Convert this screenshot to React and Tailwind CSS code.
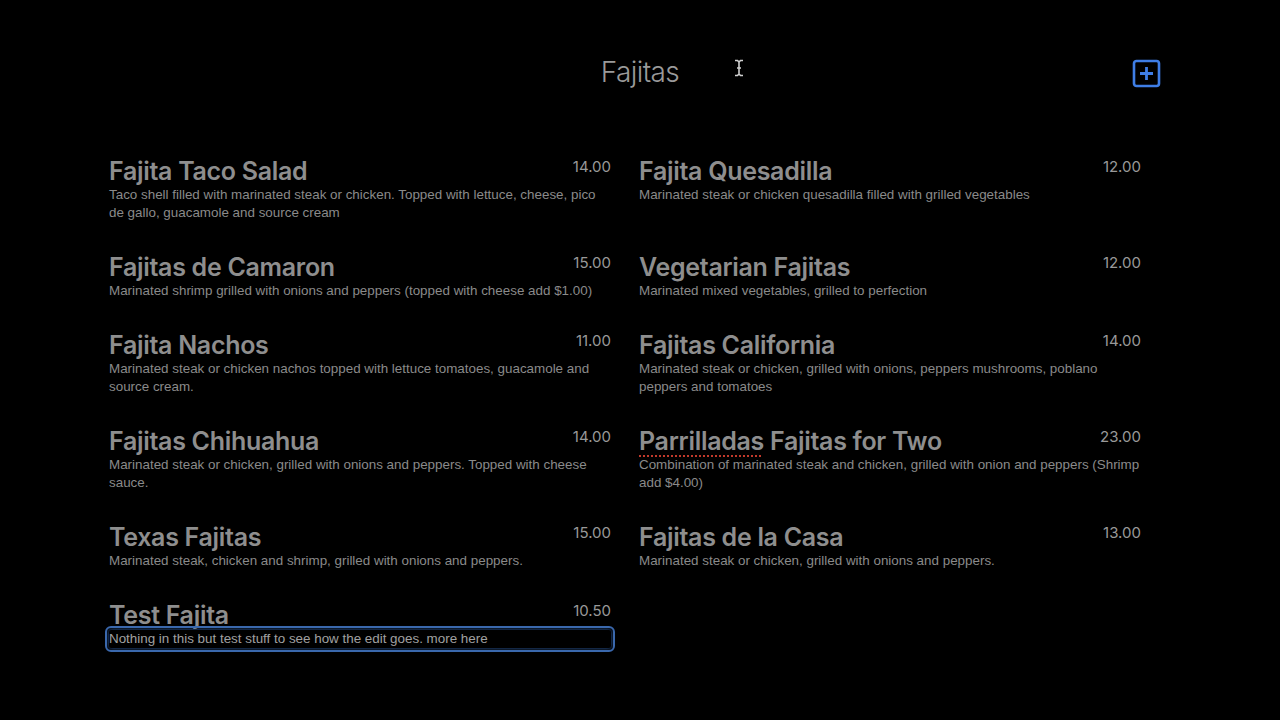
import React from "react";

const items = [
  ["Fajita Taco Salad", "14.00", "Taco shell filled with marinated steak or chicken. Topped with lettuce, cheese, pico de gallo, guacamole and source cream"],
  ["Fajita Quesadilla", "12.00", "Marinated steak or chicken quesadilla filled with grilled vegetables"],
  ["Fajitas de Camaron", "15.00", "Marinated shrimp grilled with onions and peppers (topped with cheese add $1.00)"],
  ["Vegetarian Fajitas", "12.00", "Marinated mixed vegetables, grilled to perfection"],
  ["Fajita Nachos", "11.00", "Marinated steak or chicken nachos topped with lettuce tomatoes, guacamole and source cream."],
  ["Fajitas California", "14.00", "Marinated steak or chicken, grilled with onions, peppers mushrooms, poblano peppers and tomatoes"],
  ["Fajitas Chihuahua", "14.00", "Marinated steak or chicken, grilled with onions and peppers. Topped with cheese sauce."],
  ["Parrilladas Fajitas for Two", "23.00", "Combination of marinated steak and chicken, grilled with onion and peppers (Shrimp add $4.00)"],
  ["Texas Fajitas", "15.00", "Marinated steak, chicken and shrimp, grilled with onions and peppers."],
  ["Fajitas de la Casa", "13.00", "Marinated steak or chicken, grilled with onions and peppers."],
  ["Test Fajita", "10.50", "Nothing in this but test stuff to see how the edit goes. more here", true],
];

const nameCls = "text-[25px] leading-[28px] font-semibold text-[#8e8e8e] tracking-[-0.3px]";

function Name({ text }) {
  if (text.startsWith("Parrilladas")) {
    return (
      <h2 className={nameCls}>
        <span className="underline decoration-dotted decoration-[#c0392b] decoration-2 underline-offset-[5px]">Parrilladas</span>
        {text.slice(11)}
      </h2>
    );
  }
  return <h2 className={nameCls}>{text}</h2>;
}

function MenuItem({ name, price, desc, editing }) {
  return (
    <div className="flex flex-col">
      <div className="flex justify-between items-start">
        <Name text={name} />
        <span className="text-[15px] leading-[20px] text-[#999999]">{price}</span>
      </div>
      <p
        className={
          "mt-[1px] font-['Liberation_Sans',Arial,sans-serif] text-[13.4px] leading-[18px] " +
          (editing
            ? "outline-2 outline-solid outline-[#3a68ad] outline-offset-[2px] rounded-[2px] shadow-[0_0_4px_#2f5fa8] text-[#a0a0a0]"
            : "text-[#8a8a8a]")
        }
      >
        {desc}
      </p>
    </div>
  );
}

export default function App() {
  return (
    <div className="w-[1280px] h-[720px] bg-black overflow-hidden" style={{ fontFamily: "Inter, 'Liberation Sans', sans-serif" }}>
      <header className="relative h-[157px]">
        <h1 className="pt-[52px] text-center text-[28px] leading-[40px] font-light text-[#9a9a9a] tracking-[-0.6px]">Fajitas</h1>
        <svg className="absolute left-[734px] top-[59px]" width="10" height="18" viewBox="0 0 10 18">
          <path d="M1 1.5h2.5L5 3l1.5-1.5H9M5 3v12M1 16.5h2.5L5 15l1.5 1.5H9M3 9h4" fill="none" stroke="#cfcfcf" strokeWidth="1.6" />
        </svg>
        <button className="absolute left-[1132px] top-[59px] w-[29px] h-[29px]">
          <svg width="29" height="29" viewBox="0 0 29 29">
            <rect x="2" y="2" width="25" height="25" rx="2.5" fill="none" stroke="#3f7ee6" strokeWidth="2.6" />
            <path d="M14.5 8v13M8 14.5h13" stroke="#3f7ee6" strokeWidth="2.8" />
          </svg>
        </button>
      </header>
      <main className="ml-[109px] w-[1032px] grid grid-cols-2 gap-x-[28px] gap-y-[31px]">
        {items.map(([name, price, desc, editing]) => (
          <MenuItem key={name} name={name} price={price} desc={desc} editing={editing} />
        ))}
      </main>
    </div>
  );
}
